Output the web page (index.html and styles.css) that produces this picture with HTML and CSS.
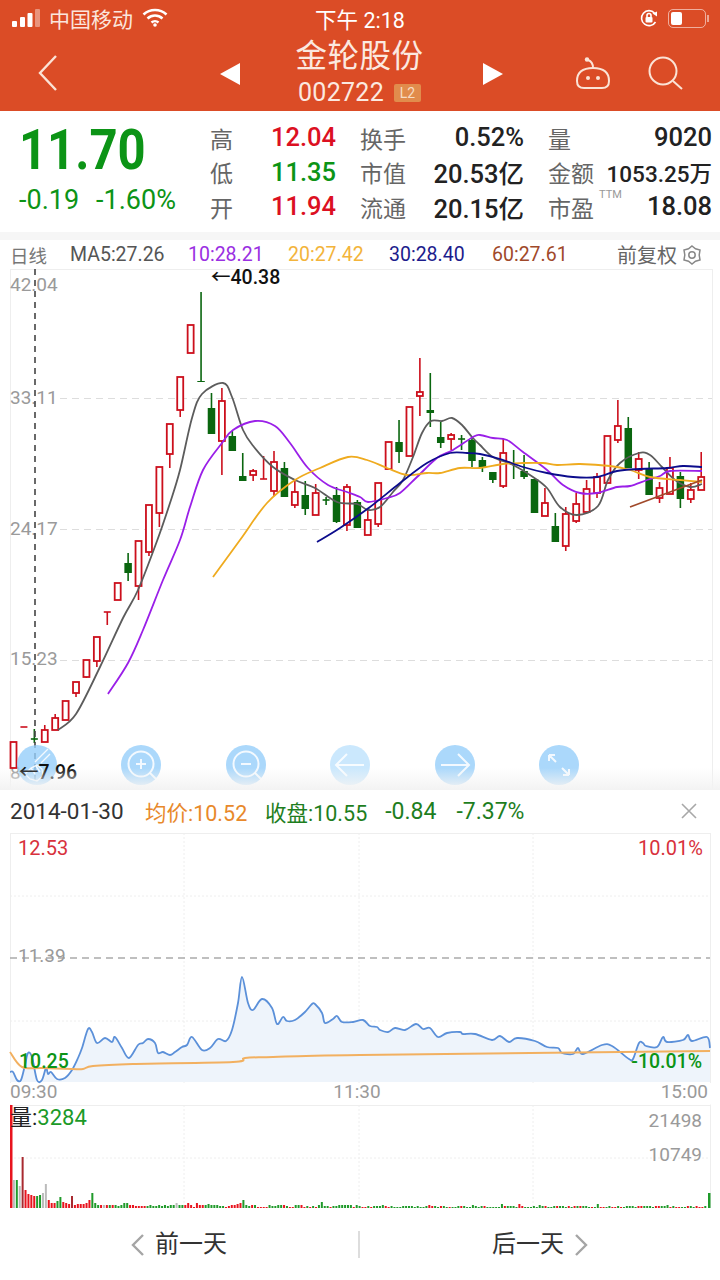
FILE: index.html
```html
<!DOCTYPE html>
<html lang="zh">
<head>
    <meta charset="UTF-8">
    <title>金轮股份 002722</title>
    <link rel="stylesheet" href="styles.css">
</head>
<body>
    <!-- 顶部 -->
    <header class="top">
        <div class="status-bar">
            <div class="status-left">
                <svg class="signal" width="30" height="20" viewBox="0 0 30 20">
                    <rect x="0" y="13" width="5" height="6" rx="1" />
                    <rect x="8" y="9" width="5" height="10" rx="1" />
                    <rect x="15.500" y="5" width="5" height="14" rx="1" />
                    <rect class="signal-off" x="23" y="1" width="5" height="18" rx="1" />
                </svg>
                <span class="carrier">中国移动</span>
                <svg class="wifi" width="26" height="20" viewBox="0 0 26 20">
                    <path d="M1.500 6.500C8 .5 18 .5 24.500 6.500" />
                    <path d="M5.500 10.500C10 6.500 16 6.500 20.500 10.500" />
                    <path d="M9.500 14.500C11.500 12.800 14.500 12.800 16.500 14.500" />
                    <circle cx="13" cy="17" r="1.800" />
                </svg>
            </div>
            <span class="clock">下午 2:18</span>
            <div class="status-right">
                <svg width="20" height="20" viewBox="0 0 20 20">
                    <path class="rot" d="M15.500 5A7.500 7.500 0 1 0 16.500 14" />
                    <path class="rot-head" d="M13.500 5.500L18 3.500L18 8.500Z" />
                    <rect class="rot-head" x="6.500" y="9" width="7" height="5.500" rx="1" />
                    <path class="rot" d="M8 9V7.500a2 2 0 0 1 4 0V9" />
                </svg>
                <div class="battery"><div class="battery-level"></div></div>
                <div class="battery-nub"></div>
            </div>
        </div>
        <div class="nav">
            <svg class="nav-back" width="22" height="38" viewBox="0 0 22 38"><path d="M19 2L3 19L19 36" /></svg>
            <div class="nav-center">
                <div class="tri tri-left"></div>
                <div class="stock">
                    <div class="stock-name">金轮股份</div>
                    <div class="stock-code">002722<span class="badge">L2</span></div>
                </div>
                <div class="tri tri-right"></div>
            </div>
            <svg class="robot" width="38" height="36" viewBox="0 0 38 36">
                <path d="M3 26C3 17 9 13 19 13S35 17 35 26C35 31 32 33 28 33H10C6 33 3 31 3 26Z" />
                <path d="M19 13C19 8 17 6 14 5" />
                <circle class="robot-fill" cx="13" cy="4.500" r="2.200" />
                <circle class="robot-fill" cx="14" cy="23" r="2" />
                <circle class="robot-fill" cx="24" cy="23" r="2" />
            </svg>
            <svg class="search" width="36" height="36" viewBox="0 0 36 36">
                <circle cx="15" cy="15" r="13.500" />
                <path d="M25 25L34 33" />
            </svg>
        </div>
    </header>

    <!-- 行情 -->
    <section class="quote">
        <div class="quote-main">
            <div class="price">11.70</div>
            <div class="change"><span>-0.19</span><span>-1.60%</span></div>
        </div>
        <div class="stats">
            <div class="stat"><span class="stat-label">高</span><span class="stat-value rise">12.04</span></div>
            <div class="stat"><span class="stat-label">换手</span><span class="stat-value">0.52%</span></div>
            <div class="stat"><span class="stat-label">量</span><span class="stat-value">9020</span></div>
            <div class="stat"><span class="stat-label">低</span><span class="stat-value fall">11.35</span></div>
            <div class="stat"><span class="stat-label">市值</span><span class="stat-value">20.53亿</span></div>
            <div class="stat"><span class="stat-label">金额</span><span class="stat-value stat-small">1053.25万</span></div>
            <div class="stat"><span class="stat-label">开</span><span class="stat-value rise">11.94</span></div>
            <div class="stat"><span class="stat-label">流通</span><span class="stat-value">20.15亿</span></div>
            <div class="stat"><span class="stat-label">市盈<sup class="ttm">TTM</sup></span><span class="stat-value">18.08</span></div>
        </div>
    </section>

    <!-- 日K -->
    <section class="kline">
        <div class="legend">
            <span class="legend-type">日线</span>
            <span class="ma5">MA5:27.26</span>
            <span class="ma10">10:28.21</span>
            <span class="ma20">20:27.42</span>
            <span class="ma30">30:28.40</span>
            <span class="ma60">60:27.61</span>
            <span class="legend-adjust">前复权
                <svg class="gear" width="20" height="20" viewBox="0 0 20 20">
                    <path d="M10 1L13.500 3.800L18 5L17.200 10L18 15L13.500 16.200L10 19L6.500 16.200L2 15L2.800 10L2 5L6.500 3.800Z" />
                    <circle cx="10" cy="10" r="3.200" />
                </svg>
            </span>
        </div>
        <div class="kline-body">
            <svg id="klineChart" class="chart" width="720" height="521" viewBox="0 269 720 521"></svg>
            <div class="tools">
                <div class="tool tool-hand">
                    <svg viewBox="0 0 40 40">
                        <path d="M18 17L31 4M24 18L33 9" />
                        <path d="M8 29L14 23L20 20L25 24L26 31L20 36L13 34Z" />
                        <path d="M14 23L18 29M19 21L23 27" />
                    </svg>
                </div>
                <div class="tool">
                    <svg viewBox="0 0 40 40"><circle cx="20" cy="19" r="12.500" /><path d="M29 28L35 34M20 14V24M15 19H25" /></svg>
                </div>
                <div class="tool">
                    <svg viewBox="0 0 40 40"><circle cx="20" cy="19" r="12.500" /><path d="M29 28L35 34M15 19H25" /></svg>
                </div>
                <div class="tool tool-off">
                    <svg viewBox="0 0 40 40"><path d="M7 20H34M17 9L6 20L17 31" /></svg>
                </div>
                <div class="tool">
                    <svg viewBox="0 0 40 40"><path d="M6 20H33M23 9L34 20L23 31" /></svg>
                </div>
                <div class="tool">
                    <svg viewBox="0 0 40 40"><path d="M10 10L17 17M10 10V16M10 10H16M30 30L23 23M30 30V24M30 30H24" /></svg>
                </div>
            </div>
            <div class="mark mark-high">←40.38</div>
            <div class="mark mark-low">←7.96</div>
            <div class="kline-fade"></div>
        </div>
    </section>

    <!-- 分时 -->
    <section class="detail">
        <div class="detail-head">
            <span class="detail-date">2014-01-30</span>
            <span class="detail-avg">均价:10.52</span>
            <span class="detail-close">收盘:10.55</span>
            <span class="detail-close detail-num">-0.84</span>
            <span class="detail-close detail-num">-7.37%</span>
            <svg class="detail-x" width="18" height="18" viewBox="0 0 18 18"><path d="M2 2L16 16M16 2L2 16" /></svg>
        </div>
        <svg id="minuteChart" class="chart" width="720" height="377" viewBox="0 833 720 377"></svg>
    </section>

    <!-- 底部翻页 -->
    <footer class="pager">
        <div class="pager-item">
            <svg class="pager-arrow" width="14" height="24" viewBox="0 0 14 24"><path d="M12 2L2 12L12 22" /></svg>
            前一天
        </div>
        <div class="pager-item">
            后一天
            <svg class="pager-arrow" width="14" height="24" viewBox="0 0 14 24"><path d="M2 2L12 12L2 22" /></svg>
        </div>
    </footer>

    <script src="chart.js"></script>
</body>
</html>
```

FILE: styles.css
```css
:root {
    --top-color: #db4c26;
    --rise-color: #dc1022;
    --fall-color: #0c9416;
    --label-color: #666;
    --value-color: #222;
    --axis-color: #9a9a9a;
    --num-font: Roboto, "Noto Sans CJK SC", sans-serif;
}

* {
    box-sizing: border-box;
}

body {
    width: 720px;
    height: 1280px;
    margin: 0;
    overflow: hidden;
    display: flex;
    flex-direction: column;
    background-color: #fff;
    font-family: Roboto, "Noto Sans CJK SC", sans-serif;
}

/* 顶部 */
.top {
    height: 111px;
    background-color: var(--top-color);
    color: #fff;
}

.status-bar {
    height: 36px;
    display: flex;
    align-items: center;
    position: relative;
    padding: 0 12px;
}

.status-left {
    display: flex;
    align-items: center;
}

.signal {
    fill: #fff;
}

.signal-off {
    opacity: 0.4;
}

.carrier {
    margin-left: 7px;
    font-size: 21px;
    color: #fbe6dd;
}

.wifi {
    margin-left: 9px;
    fill: #fff;
}

.wifi path {
    fill: none;
    stroke: #fff;
    stroke-width: 2.6;
}

.clock {
    position: absolute;
    left: 0;
    right: 0;
    text-align: center;
    font-size: 21.500px;
}

.status-right {
    margin-left: auto;
    display: flex;
    align-items: center;
}

.rot {
    fill: none;
    stroke: #fff;
    stroke-width: 1.6;
}

.rot-head {
    fill: #fff;
}

.battery {
    width: 38px;
    height: 19px;
    margin-left: 9px;
    padding: 2px;
    border: 1.5px solid rgba(255, 255, 255, 0.55);
    border-radius: 5px;
}

.battery-level {
    width: 11px;
    height: 100%;
    background-color: #fff;
    border-radius: 2px;
}

.battery-nub {
    width: 2px;
    height: 7px;
    margin-left: 1px;
    margin-right: -1px;
    background-color: rgba(255, 255, 255, 0.5);
}

.nav {
    height: 75px;
    display: flex;
    align-items: center;
    position: relative;
    padding-left: 37px;
}

.nav-back {
    margin-top: -1px;
    fill: none;
    stroke: #fbe3d6;
    stroke-width: 2.4;
}

.nav-center {
    position: absolute;
    left: 220px;
    width: 283px;
    height: 75px;
    display: flex;
    align-items: center;
    justify-content: space-between;
}

.tri {
    width: 0;
    height: 0;
    border-top: 11px solid transparent;
    border-bottom: 11px solid transparent;
}

.tri-left {
    border-right: 20px solid #fff;
}

.tri-right {
    border-left: 20px solid #fff;
}

.stock {
    margin-right: 4px;
    text-align: center;
    color: #fbe9e0;
}

.stock-name {
    font-size: 31.500px;
    line-height: 38px;
    letter-spacing: 0.5px;
}

.stock-code {
    display: flex;
    align-items: center;
    justify-content: center;
    font-size: 25px;
    line-height: 34px;
    letter-spacing: 0.3px;
}

.badge {
    width: 27px;
    height: 18px;
    margin-left: 10px;
    background-color: #e18c4c;
    border-radius: 2px;
    font-size: 14px;
    line-height: 18px;
    letter-spacing: 0;
    color: #f7dcc4;
}

.robot,
.search {
    position: absolute;
    fill: none;
    stroke: #fbe3d6;
    stroke-width: 2;
}

.robot {
    left: 574px;
    top: 19px;
}

.robot-fill {
    fill: #fbe3d6;
    stroke: none;
}

.search {
    left: 648px;
    top: 20px;
}

/* 行情 */
.quote {
    height: 121px;
    display: flex;
}

.quote-main {
    width: 210px;
    padding: 12px 0 0 19px;
    color: var(--fall-color);
}

.price {
    height: 56px;
    font-size: 49px;
    line-height: 56px;
    font-weight: 700;
    transform: scaleY(1.14);
    letter-spacing: 0;
}

.change {
    margin-top: 6px;
    display: flex;
    gap: 17px;
    font-size: 27px;
    line-height: 30px;
}

.stats {
    padding-top: 9px;
    display: grid;
    grid-template-columns: 126px 164px 164px;
    grid-auto-rows: 34.500px;
    column-gap: 24px;
}

.stat {
    display: flex;
    align-items: center;
    justify-content: space-between;
}

.stat-label {
    margin-top: 1px;
    font-size: 23px;
    color: var(--label-color);
}

.stat-value {
    font-size: 25.500px;
    font-weight: 500;
    color: var(--value-color);
}

.stat-small {
    font-size: 22.500px;
}

.rise {
    color: var(--rise-color);
}

.fall {
    color: var(--fall-color);
}

.ttm {
    position: absolute;
    margin: -1px 0 0 5px;
    font-size: 11px;
    line-height: 12px;
    color: #999;
}

/* 日K */
.kline {
    padding-top: 8px;
    background-color: #f6f6f6;
}

.legend {
    height: 29px;
    padding: 0 18px 0 10px;
    display: flex;
    align-items: center;
    background-color: #fff;
    font-size: 19.500px;
}

.legend-type {
    width: 60px;
    font-size: 18.500px;
    color: #777;
}

.ma5 {
    width: 118px;
    color: #555;
}

.ma10 {
    width: 100px;
    color: #9a2fe2;
}

.ma20 {
    width: 101px;
    color: #f3b43b;
}

.ma30 {
    width: 103px;
    color: #1c1c8c;
}

.ma60 {
    color: #a0492a;
}

.legend-adjust {
    margin-left: auto;
    display: flex;
    align-items: center;
    gap: 5px;
    font-size: 20px;
    color: #666;
}

.gear {
    fill: none;
    stroke: #888;
    stroke-width: 1.500;
}

.kline-body {
    height: 521px;
    position: relative;
    background-color: #fff;
}

.chart {
    display: block;
}

.tools {
    position: absolute;
    left: 16.500px;
    top: 476px;
    display: flex;
    gap: 64.500px;
}

.tool {
    width: 40px;
    height: 40px;
    border-radius: 50%;
    background-color: rgba(150, 206, 250, 0.8);
}

.tool-off {
    background-color: rgba(190, 226, 252, 0.8);
}

.tool svg {
    display: block;
    width: 40px;
    height: 40px;
    fill: none;
    stroke: rgba(255, 255, 255, 0.85);
    stroke-width: 2;
}

.tool-hand svg {
    stroke-width: 1.400;
}

.mark {
    position: absolute;
    font-size: 19.500px;
    line-height: 20px;
    font-weight: 500;
    color: #111;
}

.mark-high {
    left: 211px;
    top: -1px;
}

.mark-low {
    left: 19px;
    top: 494px;
}

.kline-fade {
    position: absolute;
    left: 0;
    right: 0;
    bottom: 0;
    height: 22px;
    background: linear-gradient(rgba(245, 245, 245, 0), #f3f3f3);
}

/* 分时 */
.detail {
    margin-top: 2px;
}

.detail-head {
    height: 41px;
    padding: 0 22px 3px 10px;
    display: flex;
    align-items: center;
    font-size: 21.500px;
}

.detail-date {
    width: 135px;
    font-size: 22.500px;
    color: #333;
}

.detail-avg {
    width: 120px;
    color: #e8892b;
}

.detail-close {
    margin-right: 18px;
    color: #1e7e1e;
}

.detail-num {
    margin-right: 20px;
    font-size: 23px;
}

.detail-x {
    margin-left: auto;
    fill: none;
    stroke: #a8a8a8;
    stroke-width: 1.600;
}

/* 图表内部 */
.frame {
    fill: none;
    stroke: #eee;
    stroke-width: 1;
}

.grid-dash {
    stroke: #ddd;
    stroke-width: 1;
    stroke-dasharray: 7 5;
}

.grid-strong {
    stroke: #aaa;
    stroke-width: 1.400;
    stroke-dasharray: 7 5;
}

.grid-dot {
    stroke: #eee;
    stroke-width: 1;
    stroke-dasharray: 2 2;
}

.cross {
    stroke: #444;
    stroke-width: 1.600;
    stroke-dasharray: 6 5;
}

.axis {
    font-family: var(--num-font);
    font-size: 19px;
    fill: var(--axis-color);
}

.line {
    fill: none;
    stroke-width: 1.800;
    stroke-linejoin: round;
}

.line-ma5 {
    stroke: #5c5c5c;
}

.line-ma10 {
    stroke: #9a1fe8;
}

.line-ma20 {
    stroke: #efab1f;
}

.line-ma30 {
    stroke: #0c0c8c;
}

.line-ma60 {
    stroke: #a0492a;
}

.up {
    fill: #fff;
    stroke: #cc0f1c;
    stroke-width: 1.800;
}

.up-wick {
    stroke: #cc0f1c;
    stroke-width: 1.600;
}

.down {
    fill: #0a660f;
}

.down-wick {
    stroke: #0a660f;
    stroke-width: 1.600;
}

.minute-area {
    fill: #eef4fb;
}

.minute-line {
    fill: none;
    stroke: #5b90d9;
    stroke-width: 1.800;
    stroke-linejoin: round;
}

.minute-avg {
    fill: none;
    stroke: #f2b060;
    stroke-width: 2;
}

.label-rise {
    font-family: var(--num-font);
    font-size: 20px;
    fill: #d8313c;
}

.label-fall {
    font-family: var(--num-font);
    font-size: 19.500px;
    font-weight: 500;
    fill: #0c9416;
}

.vol-name {
    font-family: var(--num-font);
    font-size: 22px;
    fill: #222;
}

.vol-now {
    fill: #1c9a28;
}

/* 底部翻页 */
.pager {
    flex: 1;
    display: flex;
    align-items: center;
    background-color: #fff;
    font-size: 24px;
    color: #333;
}

.pager-item {
    width: 50%;
    height: 27px;
    margin-top: -1px;
    display: flex;
    align-items: center;
    justify-content: center;
    gap: 10px;
    line-height: 27px;
}

.pager-item:first-child {
    border-right: 2px solid #ddd;
}

.pager-arrow {
    fill: none;
    stroke: #a5a5a5;
    stroke-width: 2.400;
}
```

FILE: chart.js
```js
// 画日K和分时图，坐标都是页面坐标（viewBox 已经对齐）
const SVG_NS = 'http://www.w3.org/2000/svg';

function el(parent, name, attrs, text) {
    const node = document.createElementNS(SVG_NS, name);
    Object.keys(attrs).forEach(k => node.setAttribute(k, attrs[k]));
    if (text) node.textContent = text;
    parent.appendChild(node);
    return node;
}

// 折线转平滑曲线
function smooth(pts) {
    let d = 'M' + pts[0].join(' ');
    for (let i = 0; i < pts.length - 1; i++) {
        const p0 = pts[i - 1] || pts[i];
        const p1 = pts[i];
        const p2 = pts[i + 1];
        const p3 = pts[i + 2] || p2;
        const c1 = [p1[0] + (p2[0] - p0[0]) / 6, p1[1] + (p2[1] - p0[1]) / 6];
        const c2 = [p2[0] - (p3[0] - p1[0]) / 6, p2[1] - (p3[1] - p1[1]) / 6];
        d += 'C' + c1.join(' ') + ' ' + c2.join(' ') + ' ' + p2.join(' ');
    }
    return d;
}

function curve(parent, cls, pts) {
    el(parent, 'path', { class: cls, d: smooth(pts) });
}

function hline(parent, cls, y, x1, x2) {
    el(parent, 'line', { class: cls, x1: x1, x2: x2, y1: y, y2: y });
}

function vline(parent, cls, x, y1, y2) {
    el(parent, 'line', { class: cls, x1: x, x2: x, y1: y1, y2: y2 });
}

// [涨跌, 最高, 实体上沿, 实体下沿, 最低]
const candles = [
    [1, 742, 742, 768, 768], [1, 727, 727, 727, 727], [0, 729, 739, 739, 743], [1, 725, 730, 742, 742],
    [1, 714, 718, 730, 730], [1, 701, 701, 720, 720], [1, 682, 682, 693, 697], [1, 660, 660, 677, 678],
    [1, 637, 637, 661, 667], [1, 612, 612, 612, 625], [1, 583, 583, 600, 600], [0, 553, 563, 573, 581],
    [1, 541, 541, 586, 600], [1, 505, 505, 552, 556], [1, 467, 467, 513, 527], [1, 424, 424, 454, 468],
    [1, 377, 377, 410, 417], [1, 325, 325, 353, 353], [0, 292, 381, 382, 382], [0, 393, 408, 434, 434],
    [1, 388, 401, 441, 475], [0, 431, 436, 451, 451], [0, 453, 476, 481, 481], [1, 469, 471, 475, 481],
    [1, 456, 479, 479, 479], [1, 451, 462, 491, 496], [0, 462, 468, 497, 497], [1, 480, 492, 505, 508],
    [0, 481, 495, 509, 515], [1, 484, 493, 515, 515], [0, 497, 500, 500, 505], [0, 487, 495, 522, 523],
    [1, 484, 487, 525, 531], [0, 500, 502, 528, 528], [1, 510, 520, 535, 535], [1, 483, 483, 524, 527],
    [1, 442, 442, 469, 469], [0, 420, 442, 452, 463], [1, 407, 407, 456, 456], [1, 358, 392, 396, 416],
    [0, 373, 410, 413, 427], [0, 422, 437, 443, 448], [1, 433, 435, 439, 450], [0, 435, 439, 439, 450],
    [0, 437, 440, 461, 467], [0, 457, 460, 468, 472], [0, 472, 472, 480, 483], [1, 439, 453, 486, 488],
    [0, 450, 464, 464, 479], [0, 455, 471, 477, 479], [0, 479, 479, 513, 513], [1, 488, 503, 516, 516],
    [0, 513, 526, 542, 542], [1, 507, 514, 546, 551], [1, 493, 504, 521, 523], [1, 480, 489, 512, 513],
    [1, 473, 477, 493, 498], [1, 436, 436, 483, 483], [1, 400, 426, 440, 443], [0, 417, 428, 468, 468],
    [1, 452, 459, 470, 479], [0, 462, 469, 495, 495], [1, 482, 488, 498, 503], [1, 457, 468, 494, 494],
    [0, 472, 476, 499, 508], [1, 483, 490, 499, 503], [1, 452, 477, 490, 490]
];

const ma5 = [[58, 730], [76, 714], [100, 667], [123, 618], [138, 590], [157, 541], [170, 503], [180, 470], [192, 418], [202, 394], [223, 383], [232, 397], [243, 430], [254, 447], [273, 467], [295, 480], [315, 488], [337, 502], [357, 504], [368, 510], [380, 507], [393, 492], [403, 480], [413, 457], [422, 433], [431, 421], [442, 421], [452, 418], [462, 425], [472, 437], [480, 445], [493, 457], [513, 465], [533, 477], [547, 488], [560, 507], [577, 515], [598, 506], [608, 480], [620, 463], [639, 453], [650, 455], [662, 467], [675, 480], [690, 487], [702, 484]];
const ma10 = [[108, 694], [128, 663], [143, 630], [163, 580], [180, 540], [190, 507], [203, 470], [222, 443], [233, 430], [255, 421], [275, 426], [290, 443], [308, 468], [328, 485], [347, 492], [360, 497], [368, 502], [387, 498], [400, 493], [417, 477], [437, 458], [453, 450], [473, 437], [480, 435], [493, 438], [507, 440], [523, 452], [547, 470], [563, 485], [580, 493], [597, 493], [617, 487], [630, 486], [647, 480], [660, 476], [670, 471], [702, 471]];
const ma20 = [[213, 577], [240, 540], [267, 503], [295, 480], [320, 468], [348, 457], [367, 460], [387, 468], [407, 475], [427, 473], [440, 473], [460, 468], [480, 468], [503, 464], [523, 463], [543, 463], [557, 465], [580, 464], [610, 466], [630, 470], [650, 477], [680, 480], [702, 482]];
const ma30 = [[317, 542], [340, 528], [370, 507], [400, 483], [427, 463], [450, 453], [467, 453], [480, 454], [500, 459], [523, 467], [547, 473], [573, 477], [597, 477], [617, 471], [640, 469], [667, 468], [683, 466], [702, 467]];
const ma60 = [[630, 507], [702, 480]];

function drawKline() {
    const svg = document.getElementById('klineChart');
    el(svg, 'rect', { class: 'frame', x: 10.5, y: 269.5, width: 702, height: 530 });
    [398.5, 529.5, 660.5].forEach(y => hline(svg, 'grid-dash', y, 60, 712));

    [['42.04', 291], ['33.11', 404], ['24.17', 535], ['15.23', 665], ['8', 779]].forEach(a => {
        el(svg, 'text', { class: 'axis', x: 10, y: a[1] }, a[0]);
    });

    candles.forEach((c, i) => {
        const x = 13.5 + i * 10.42;
        const w = c[0] ? 'up-wick' : 'down-wick';
        if (c[1] < c[2]) vline(svg, w, x, c[1], c[2]);
        if (c[4] > c[3]) vline(svg, w, x, c[3], c[4]);
        if (c[3] - c[2] < 1) {
            hline(svg, w, c[2], x - 3.5, x + 3.5);
        } else if (c[0]) {
            el(svg, 'rect', { class: 'up', x: x - 3, y: c[2], width: 6, height: c[3] - c[2] });
        } else {
            el(svg, 'rect', { class: 'down', x: x - 3.75, y: c[2], width: 7.5, height: c[3] - c[2] });
        }
    });

    curve(svg, 'line line-ma5', ma5);
    curve(svg, 'line line-ma10', ma10);
    curve(svg, 'line line-ma20', ma20);
    curve(svg, 'line line-ma30', ma30);
    curve(svg, 'line line-ma60', ma60);

    vline(svg, 'cross', 35, 269, 786);
}

const minutePts = [[10, 1072], [13, 1072], [17, 1080], [21, 1080], [25, 1065], [28, 1053], [32, 1057], [37, 1080], [42, 1080], [46, 1068], [48, 1074], [51, 1072], [57, 1079], [65, 1078], [72, 1070], [78, 1058], [82, 1048], [88, 1029], [92, 1032], [97, 1043], [105, 1038], [112, 1042], [115, 1037], [122, 1048], [129, 1058], [138, 1045], [143, 1043], [148, 1039], [155, 1043], [158, 1053], [163, 1052], [170, 1055], [175, 1052], [182, 1047], [187, 1045], [192, 1037], [202, 1050], [210, 1048], [218, 1039], [226, 1041], [232, 1030], [238, 1003], [242, 977], [248, 1003], [253, 1010], [262, 999], [272, 1008], [277, 1024], [283, 1017], [287, 1021], [295, 1020], [305, 1012], [312, 1004], [315, 1004], [322, 1013], [325, 1023], [333, 1019], [337, 1016], [342, 1022], [353, 1022], [363, 1020], [370, 1026], [377, 1027], [380, 1030], [388, 1032], [395, 1028], [405, 1030], [416, 1024], [423, 1029], [430, 1028], [438, 1037], [447, 1033], [460, 1032], [463, 1034], [475, 1034], [492, 1040], [500, 1036], [509, 1042], [517, 1038], [535, 1041], [547, 1047], [558, 1048], [562, 1053], [573, 1054], [578, 1048], [583, 1054], [602, 1045], [612, 1046], [629, 1059], [633, 1059], [639, 1043], [643, 1043], [646, 1046], [657, 1047], [663, 1037], [667, 1042], [683, 1040], [688, 1035], [692, 1041], [707, 1037], [710, 1048]];
const minuteAvg = [[10, 1052], [22, 1067], [43, 1068], [72, 1069], [83, 1069], [93, 1066], [133, 1064], [233, 1062], [245, 1058], [273, 1057], [360, 1055], [710, 1051]];

// 开盘前几十根量柱 [高度, 颜色]
const R = '#e8141e', G = '#1f9a2a', H = '#bbb', D = '#a82a30';
const volHead = [[103, R], [28, H], [28, G], [22, H], [51, D], [18, R], [14, R], [13, R], [12, R], [12, G], [13, G], [15, H], [24, H], [8, R], [5, R], [5, R], [7, G], [11, G], [6, R], [5, R], [4, R], [12, D], [3, R], [4, R], [4, R], [4, R], [5, R], [8, R], [15, G], [5, G], [3, G], [3, R], [3, H], [3, R], [3, G], [3, R], [3, G], [2, G], [3, G], [5, G], [5, G], [3, R], [3, R], [2, R], [2, R], [2, R], [2, R], [2, G], [3, G], [2, G]];
const volMarks = { 57: [5, H], 60: [3, R], 61: [5, R], 62: [3, R], 64: [5, R], 65: [3, R], 75: [2, R], 76: [3, R], 77: [3, R], 78: [4, R], 79: [5, R], 80: [8, G], 100: [3, R], 107: [6, G] };

function volumeBar(i, seed) {
    if (i < volHead.length) return volHead[i];
    if (volMarks[i]) return volMarks[i];
    const left = i < 120;
    const h = 1 + seed % (left ? 3 : 2) + (seed % 23 === 0 ? 2 : 0);
    return [h, seed % 3 === 0 ? R : G];
}

function drawMinute() {
    const svg = document.getElementById('minuteChart');
    el(svg, 'rect', { class: 'frame', x: 10.5, y: 833.5, width: 700, height: 272 });
    [184, 359, 533].forEach(x => vline(svg, 'grid-dot', x, 833, 1208));
    hline(svg, 'grid-dot', 896, 10, 710);
    hline(svg, 'grid-dot', 1021, 10, 710);
    hline(svg, 'grid-dot', 1158, 10, 710);
    vline(svg, 'frame', 710.5, 1105, 1208);
    vline(svg, 'frame', 10.5, 1105, 1208);

    el(svg, 'path', { class: 'minute-area', d: smooth(minutePts) + 'L710 1082L10 1082Z' });
    el(svg, 'rect', { x: 10, y: 1083, width: 701, height: 21.5, fill: '#fff' });

    hline(svg, 'grid-strong', 958, 10, 710);
    el(svg, 'text', { class: 'axis', x: 18, y: 962 }, '11.39');
    el(svg, 'text', { class: 'label-rise', x: 18, y: 855 }, '12.53');
    el(svg, 'text', { class: 'label-rise', x: 703, y: 855, 'text-anchor': 'end' }, '10.01%');

    curve(svg, 'minute-line', minutePts);
    curve(svg, 'minute-avg', minuteAvg);

    el(svg, 'text', { class: 'label-fall', x: 19, y: 1068 }, '10.25');
    el(svg, 'text', { class: 'label-fall', x: 702, y: 1068, 'text-anchor': 'end' }, '-10.01%');

    el(svg, 'text', { class: 'axis', x: 10, y: 1098 }, '09:30');
    el(svg, 'text', { class: 'axis', x: 357, y: 1098, 'text-anchor': 'middle' }, '11:30');
    el(svg, 'text', { class: 'axis', x: 708, y: 1098, 'text-anchor': 'end' }, '15:00');

    let seed = 7;
    for (let i = 0; i < 240; i++) {
        seed = (seed * 31 + 11) % 1009;
        const bar = volumeBar(i, seed);
        const x = 10 + i * 2.905;
        el(svg, 'rect', { x: x, y: 1208 - bar[0], width: i === 0 ? 2.5 : 2, height: bar[0], fill: bar[1] });
    }
    el(svg, 'rect', { x: 708, y: 1193, width: 2.5, height: 15, fill: G });

    const name = el(svg, 'text', { class: 'vol-name', x: 10, y: 1125 }, '量:');
    el(name, 'tspan', { class: 'vol-now' }, '3284');
    el(svg, 'text', { class: 'axis', x: 702, y: 1127, 'text-anchor': 'end' }, '21498');
    el(svg, 'text', { class: 'axis', x: 702, y: 1161, 'text-anchor': 'end' }, '10749');
}

drawKline();
drawMinute();
```
